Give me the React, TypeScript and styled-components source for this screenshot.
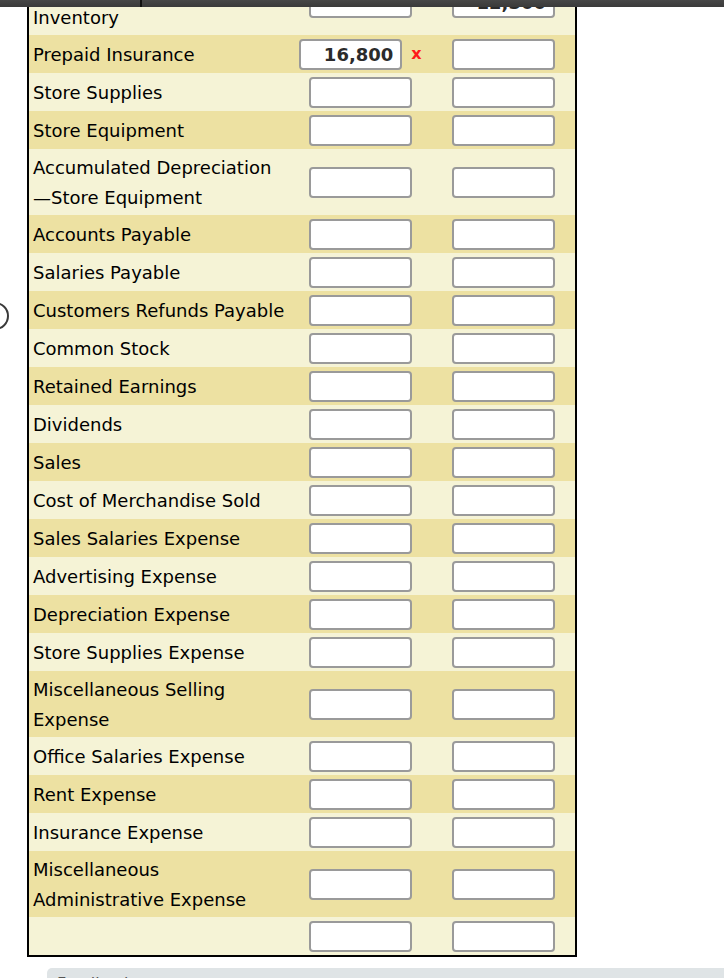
import React from 'react';
import styled, { createGlobalStyle } from 'styled-components';

const GlobalStyle = createGlobalStyle`
  html, body {
    margin: 0;
    padding: 0;
    background: #ffffff;
    overflow: hidden;
  }
  body {
    font-family: "DejaVu Sans", Verdana, sans-serif;
  }
`;

const Page = styled.div`
  position: relative;
  height: 978px;
  overflow: hidden;
`;

const TopBar = styled.div`
  position: fixed;
  top: 0;
  left: 0;
  right: 0;
  height: 7px;
  background: linear-gradient(#474747, #3a3a3a);
  z-index: 5;

  &::after {
    content: '';
    position: absolute;
    top: 0;
    bottom: 0;
    left: 140px;
    width: 2px;
    background: #111;
  }
`;

const SideButton = styled.div`
  position: absolute;
  left: -19px;
  top: 302px;
  width: 24px;
  height: 24px;
  border: 2px solid #3a3a3a;
  border-radius: 50%;
  background: #fff;
`;

const Worksheet = styled.div`
  width: 546px;
  margin: -33px 0 0 27px;
  border: 2px solid #000;
`;

const Row = styled.div<{ $shade: boolean }>`
  display: grid;
  grid-template-columns: 260px 143px 143px;
  align-items: center;
  min-height: 38px;
  background: ${({ $shade }) => ($shade ? '#ede1a2' : '#f5f3d6')};
`;

const Label = styled.div`
  padding: 4px 4px 2px;
  font-size: 18px;
  line-height: 30px;
  color: #000;
`;

const Cell = styled.div`
  display: flex;
  align-items: center;
  justify-content: center;
  gap: 9px;
`;

const AmountInput = styled.input`
  box-sizing: border-box;
  width: 103px;
  height: 31px;
  margin: 0;
  padding: 0 7px;
  border: 2px solid #9a9a9a;
  border-radius: 4px;
  background: #fff;
  font-family: "DejaVu Sans", Verdana, sans-serif;
  font-size: 18px;
  font-weight: bold;
  color: #2b2b2b;
  text-align: right;
  outline: none;
`;

const WrongMark = styled.span`
  font-family: "DejaVu Sans", Verdana, sans-serif;
  font-size: 16px;
  font-weight: bold;
  color: #ff1a1a;
  line-height: 1;
`;

const Feedback = styled.div`
  margin: 11px 0 0 47px;
  height: 60px;
  padding: 6px 10px;
  background: #dfe4e6;
  border-radius: 5px 0 0 0;
  font-family: "DejaVu Sans", Verdana, sans-serif;
  font-size: 16px;
  line-height: 20px;
  color: #555;
`;

type Account = {
  lines: string[];
  debit?: string;
  credit?: string;
  debitWrong?: boolean;
};

const accounts: Account[] = [
  { lines: ['Merchandise', 'Inventory'], credit: '12,300' },
  { lines: ['Prepaid Insurance'], debit: '16,800', debitWrong: true },
  { lines: ['Store Supplies'] },
  { lines: ['Store Equipment'] },
  { lines: ['Accumulated Depreciation', '\u2014Store Equipment'] },
  { lines: ['Accounts Payable'] },
  { lines: ['Salaries Payable'] },
  { lines: ['Customers Refunds Payable'] },
  { lines: ['Common Stock'] },
  { lines: ['Retained Earnings'] },
  { lines: ['Dividends'] },
  { lines: ['Sales'] },
  { lines: ['Cost of Merchandise Sold'] },
  { lines: ['Sales Salaries Expense'] },
  { lines: ['Advertising Expense'] },
  { lines: ['Depreciation Expense'] },
  { lines: ['Store Supplies Expense'] },
  { lines: ['Miscellaneous Selling', 'Expense'] },
  { lines: ['Office Salaries Expense'] },
  { lines: ['Rent Expense'] },
  { lines: ['Insurance Expense'] },
  { lines: ['Miscellaneous', 'Administrative Expense'] },
  { lines: [] },
];

const App: React.FC = () => {
  return (
    <Page>
      <GlobalStyle />
      <TopBar />
      <SideButton />
      <Worksheet>
        {accounts.map((acc, i) => (
          <Row key={i} $shade={i % 2 === 1}>
            <Label>
              {acc.lines.map((line, j) => (
                <React.Fragment key={j}>
                  {j > 0 && <br />}
                  {line}
                </React.Fragment>
              ))}
            </Label>
            <Cell>
              <AmountInput type="text" defaultValue={acc.debit ?? ''} />
              {acc.debitWrong && <WrongMark>x</WrongMark>}
            </Cell>
            <Cell>
              <AmountInput type="text" defaultValue={acc.credit ?? ''} />
            </Cell>
          </Row>
        ))}
      </Worksheet>
      <Feedback>Feedback</Feedback>
    </Page>
  );
};

export default App;
